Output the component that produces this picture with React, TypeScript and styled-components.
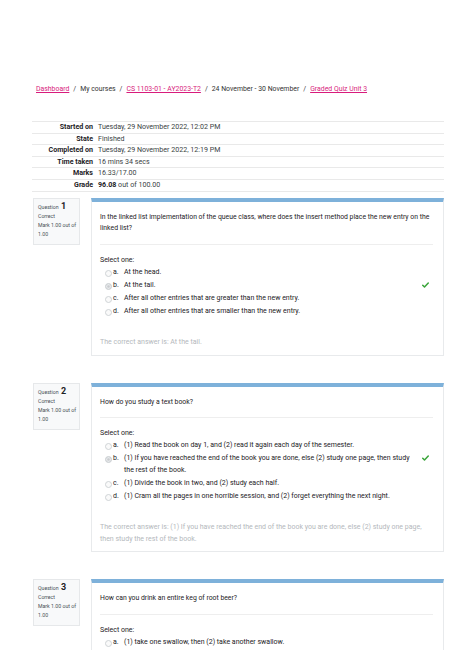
import styled, { createGlobalStyle } from 'styled-components'

const GlobalStyle = createGlobalStyle`
    html, body {
        margin: 0;
        padding: 0;
        background: #ffffff;
    }
    body {
        font-family: Roboto, "Liberation Sans", sans-serif;
        color: #1d2125;
    }
`

type Option = { letter: string; text: string; checked?: boolean }
type Question = {
    no: number
    text: string
    options: Option[]
    answer: string
}

const SUMMARY: [string, React.ReactNode][] = [
    ['Started on', 'Tuesday, 29 November 2022, 12:02 PM'],
    ['State', 'Finished'],
    ['Completed on', 'Tuesday, 29 November 2022, 12:19 PM'],
    ['Time taken', '16 mins 34 secs'],
    ['Marks', '16.33/17.00'],
    ['Grade', <><b>96.08</b> out of 100.00</>],
]

const QUESTIONS: Question[] = [
    {
        no: 1,
        text: 'In the linked list implementation of the queue class, where does the insert method place the new entry on the linked list?',
        options: [
            { letter: 'a.', text: 'At the head.' },
            { letter: 'b.', text: 'At the tail.', checked: true },
            { letter: 'c.', text: 'After all other entries that are greater than the new entry.' },
            { letter: 'd.', text: 'After all other entries that are smaller than the new entry.' },
        ],
        answer: 'The correct answer is: At the tail.',
    },
    {
        no: 2,
        text: 'How do you study a text book?',
        options: [
            { letter: 'a.', text: '(1) Read the book on day 1, and (2) read it again each day of the semester.' },
            {
                letter: 'b.',
                text: '(1) If you have reached the end of the book you are done, else (2) study one page, then study the rest of the book.',
                checked: true,
            },
            { letter: 'c.', text: '(1) Divide the book in two, and (2) study each half.' },
            { letter: 'd.', text: '(1) Cram all the pages in one horrible session, and (2) forget everything the next night.' },
        ],
        answer: 'The correct answer is: (1) If you have reached the end of the book you are done, else (2) study one page, then study the rest of the book.',
    },
    {
        no: 3,
        text: 'How can you drink an entire keg of root beer?',
        options: [{ letter: 'a.', text: '(1) take one swallow, then (2) take another swallow.' }],
        answer: '',
    },
]

// the reference is a clipped page: nothing shows below ~650px
const Page = styled.div`
    height: 650px;
    overflow: hidden;
    padding: 83px 30px 0 32px;
    box-sizing: border-box;
`

const Crumbs = styled.nav`
    padding-left: 4px;
    font-size: 6.9px;
    line-height: 12px;
    color: #333;
`

const Crumb = styled.a`
    color: #d81b7c;
    text-decoration: underline;
`

const Sep = styled.span`
    margin: 0 4px;
`

const Summary = styled.table`
    width: 412px;
    margin-top: 26px;
    border-collapse: collapse;
    font-size: 7.1px;
`

const Row = styled.tr`
    border-top: 1px solid #e9e9e9;
    height: 11.6px;
    &:last-child {
        border-bottom: 1px solid #e9e9e9;
    }
`

const Label = styled.th`
    width: 61px;
    padding: 0 5px 0 0;
    text-align: right;
    font-weight: 700;
    color: #1d2125;
    line-height: 10.6px;
    white-space: nowrap;
`

const Value = styled.td`
    padding: 0;
    color: #3b3f44;
    line-height: 10.6px;
    b {
        color: #1d2125;
    }
`

const QList = styled.div`
    display: flex;
    flex-direction: column;
    gap: 27px;
    margin-top: 6px;
`

const QRow = styled.div`
    display: grid;
    grid-template-columns: 47px 353px;
    column-gap: 11px;
    align-items: start;
    padding-left: 1px;
`

const Info = styled.div`
    background: #f8f9fa;
    border: 1px solid #e6e8ea;
    padding: 3px 2px 5px 4px;
    font-size: 5.2px;
    line-height: 9px;
    color: #495057;
`

const QNo = styled.div`
    b {
        font-size: 9px;
        color: #1d2125;
        margin-left: 1px;
    }
`

const Card = styled.div`
    border: 1px solid #e8eaec;
    border-top: 4px solid #7eb1da;
    padding: 10px 9px 6px 8px;
    font-size: 7px;
    line-height: 11.5px;
    color: #1d2125;
`

const QText = styled.p`
    margin: 0 1px 0 0;
    padding-bottom: 9px;
    border-bottom: 1px solid #eeeeee;
    font-size: 6.85px;
`

const Prompt = styled.div`
    margin-top: 10px;
`

const Opt = styled.div`
    display: grid;
    grid-template-columns: 6px 13px 1fr 17px;
    align-items: start;
    padding: 0.75px 0 0.75px 5px;
`

const Radio = styled.span<{ $on?: boolean }>`
    width: 5px;
    height: 5px;
    margin-top: 3px;
    border-radius: 50%;
    border: 0.6px solid #cfd3d6;
    background: ${({ $on }) => ($on ? '#c8cbce' : '#fafafa')};
    box-shadow: ${({ $on }) => ($on ? 'inset 0 0 0 1.2px #e8eaec' : 'none')};
`

const Letter = styled.span`
    padding-left: 2px;
`

const Tick = styled.svg`
    margin-top: 2px;
    justify-self: center;
`

const Answer = styled.div`
    margin-top: 19px;
    color: #b4b8bc;
`

function Check() {
    return (
        <Tick width="7" height="6" viewBox="0 0 14 12">
            <path d="M1.5 6.5 L5 10 L12.5 2" fill="none" stroke="#3aa53a" strokeWidth="3" strokeLinecap="round" strokeLinejoin="round" />
        </Tick>
    )
}

export default function App() {
    return (
        <>
            <GlobalStyle />
            <Page>
                <Crumbs>
                    <Crumb>Dashboard</Crumb>
                    <Sep>/</Sep>My courses<Sep>/</Sep>
                    <Crumb>CS 1103-01 - AY2023-T2</Crumb>
                    <Sep>/</Sep>24 November - 30 November<Sep>/</Sep>
                    <Crumb>Graded Quiz Unit 3</Crumb>
                </Crumbs>
                <Summary>
                    <tbody>
                        {SUMMARY.map(([k, v]) => (
                            <Row key={k}>
                                <Label>{k}</Label>
                                <Value>{v}</Value>
                            </Row>
                        ))}
                    </tbody>
                </Summary>
                <QList>
                    {QUESTIONS.map((q) => (
                        <QRow key={q.no}>
                            <Info>
                                <QNo>
                                    Question <b>{q.no}</b>
                                </QNo>
                                <div>Correct</div>
                                <div>Mark 1.00 out of 1.00</div>
                            </Info>
                            <Card>
                                <QText>{q.text}</QText>
                                <Prompt>Select one:</Prompt>
                                {q.options.map((o) => (
                                    <Opt key={o.letter}>
                                        <Radio $on={o.checked} />
                                        <Letter>{o.letter}</Letter>
                                        <span>{o.text}</span>
                                        {o.checked ? <Check /> : <span />}
                                    </Opt>
                                ))}
                                {q.answer && <Answer>{q.answer}</Answer>}
                            </Card>
                        </QRow>
                    ))}
                </QList>
            </Page>
        </>
    )
}
